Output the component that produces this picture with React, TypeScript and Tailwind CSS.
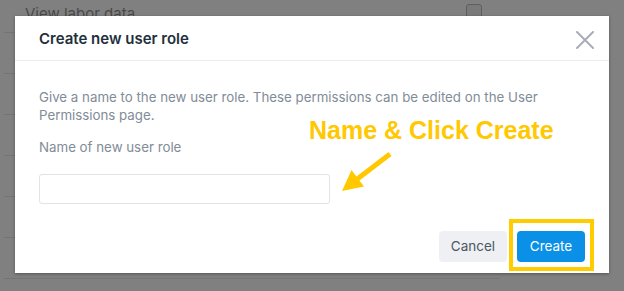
import React from "react";

export default function App() {
  const rows = [0, 1, 2, 3, 4, 5, 6];
  return (
    <div className="relative w-[624px] h-[291px] overflow-hidden bg-[#808080]" style={{ fontFamily: "Inter, 'Noto Sans', sans-serif" }}>
      {/* background list under overlay */}
      <div className="flex flex-col">
        <div className="h-[33px] ml-[4px] w-[496px] border-b border-[#747474] relative flex items-start">
          <span className="ml-[21px] mt-[3px] text-[15px] text-[#4a4a4a]">View labor data</span>
          <span className="absolute left-[462px] top-[4px] w-[16px] h-[16px] rounded-[3px] border border-[#5e5e5e] bg-[#7a7a7a]" />
        </div>
        {rows.map((r) => (
          <div key={r} className="h-[41px] ml-[4px] w-[496px] border-b border-[#747474]" />
        ))}
      </div>

      {/* modal */}
      <div className="absolute left-[15px] top-[16px] w-[594px] h-[257px] bg-white shadow-[0_1px_3px_rgba(0,0,0,0.35)] flex flex-col">
        <div className="h-[45px] border-b border-[#e9edf0] flex items-center justify-between pl-6 pr-[15px]">
          <span className="text-[15px] font-semibold text-[#222f3c] mt-[3px]">Create new user role</span>
          <svg width="18" height="18" viewBox="0 0 18 18" className="mt-[3px]">
            <path d="M1 1 L17 17 M17 1 L1 17" stroke="#a7aeb6" strokeWidth="2" strokeLinecap="round" />
          </svg>
        </div>
        <div className="flex flex-col px-6 pt-[27px]">
          <p className="text-[13.3px] leading-[18px] text-[#818c97]">
            Give a name to the new user role. These permissions can be edited on the User Permissions page.
          </p>
          <p className="mt-[14px] text-[13.3px] leading-[18px] text-[#818c97]">Name of new user role</p>
          <input className="mt-[18px] w-[291px] h-[30px] border border-[#e1e3e5] rounded-[3px] outline-none" />
        </div>
        <div className="flex justify-end gap-[10px] pr-6 mt-[27px]">
          <button className="w-[68px] h-[31px] rounded-[4px] bg-[#eef0f4] text-[13.5px] text-[#4b5662]">Cancel</button>
          <button className="w-[68px] h-[31px] rounded-[4px] bg-[#0a90e6] text-[13.5px] text-white">Create</button>
        </div>

        {/* annotations */}
        <div className="absolute left-[494px] top-[203px] w-[85px] h-[52px] border-4 border-[#ffcc00]" />
        <span
          className="absolute left-[294px] top-[102px] text-[25px] leading-[25px] font-bold text-[#ffc800] whitespace-nowrap"
          style={{ fontFamily: "'Liberation Sans', Arial, sans-serif" }}
        >
          Name &amp; Click Create
        </span>
      </div>
      <svg className="absolute left-0 top-0" width="624" height="291" viewBox="0 0 624 291">
        <line x1="390" y1="154" x2="356" y2="180" stroke="#ffc800" strokeWidth="5" strokeLinecap="butt" />
        <polygon points="342,191 364,186.5 351.5,170" fill="#ffc800" />
      </svg>
    </div>
  );
}
